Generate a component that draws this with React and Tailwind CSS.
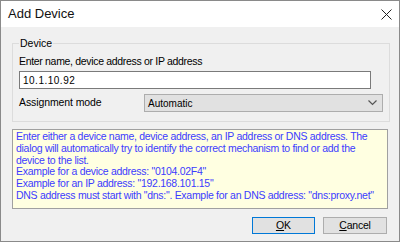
import React from "react";

const App = () => {
  return (
    <div
      className="w-[400px] h-[242px] border border-[#8a8a8a] bg-[#f0f0f0] flex flex-col text-[#000]"
      style={{ fontFamily: '"Liberation Sans", Arial, sans-serif' }}
    >
      <div className="h-[26px] bg-white flex items-center justify-between pl-[7px] pr-[6px]">
        <span className="text-[13px] text-[#111]">Add Device</span>
        <svg width="11" height="11" viewBox="0 0 11 11" className="mr-[1px]">
          <path d="M0.5 0.5L10.5 10.5M10.5 0.5L0.5 10.5" stroke="#222" strokeWidth="1" />
        </svg>
      </div>

      <div className="flex flex-col px-[11px]">
        <fieldset className="mt-[10px] border border-[#dcdcdc] px-[6px] pb-[9px] h-[85px]">
          <legend className="text-[10.5px] leading-[12px] px-[1px]">Device</legend>
          <div className="text-[10.5px] leading-[13px] mt-[6px] whitespace-nowrap tracking-[-0.32px]">
            Enter name, device address or IP address
          </div>
          <div className="mt-[3px] w-[352px] h-[18px] bg-white border border-[#7a7a7a] flex items-center px-[3px] text-[10px] tracking-[0.5px]">
            10.1.10.92
          </div>
          <div className="mt-[5px] flex items-center">
            <span className="w-[125px] text-[10.5px] tracking-[-0.1px]">Assignment mode</span>
            <div className="w-[239px] h-[18px] bg-[#e1e1e1] border border-[#adadad] flex items-center justify-between pl-[3px] pr-[5px] text-[10px]">
              <span>Automatic</span>
              <svg width="9" height="6" viewBox="0 0 9 6">
                <path d="M0.5 0.5L4.5 4.5L8.5 0.5" stroke="#555" strokeWidth="1.2" fill="none" />
              </svg>
            </div>
          </div>
        </fieldset>

        <div className="mt-[7px] h-[80px] border border-[#a0a0a0] bg-[#ffffe1] px-[3px] pt-[1px] text-[10.5px] leading-[11.8px] tracking-[-0.29px] text-[#3c3cff] whitespace-nowrap overflow-hidden">
          <div>Enter either a device name, device address, an IP address or DNS address. The</div>
          <div>dialog will automatically try to identify the correct mechanism to find or add the</div>
          <div>device to the list.</div>
          <div>Example for a device address: "0104.02F4"</div>
          <div>Example for an IP address: "192.168.101.15"</div>
          <div>DNS address must start with "dns:". Example for an DNS address: "dns:proxy.net"</div>
        </div>

        <div className="mt-[8px] flex justify-end gap-[8px] pr-[1px]">
          <button className="w-[63px] h-[17px] bg-[#e1e1e1] border border-[#0078d7] text-[10.5px] leading-none flex items-center justify-center">
            <span><span className="underline">O</span>K</span>
          </button>
          <button className="w-[64px] h-[17px] bg-[#e1e1e1] border border-[#adadad] text-[10.5px] leading-none flex items-center justify-center tracking-[-0.2px]">
            <span><span className="underline">C</span>ancel</span>
          </button>
        </div>
      </div>
    </div>
  );
};

export default App;
